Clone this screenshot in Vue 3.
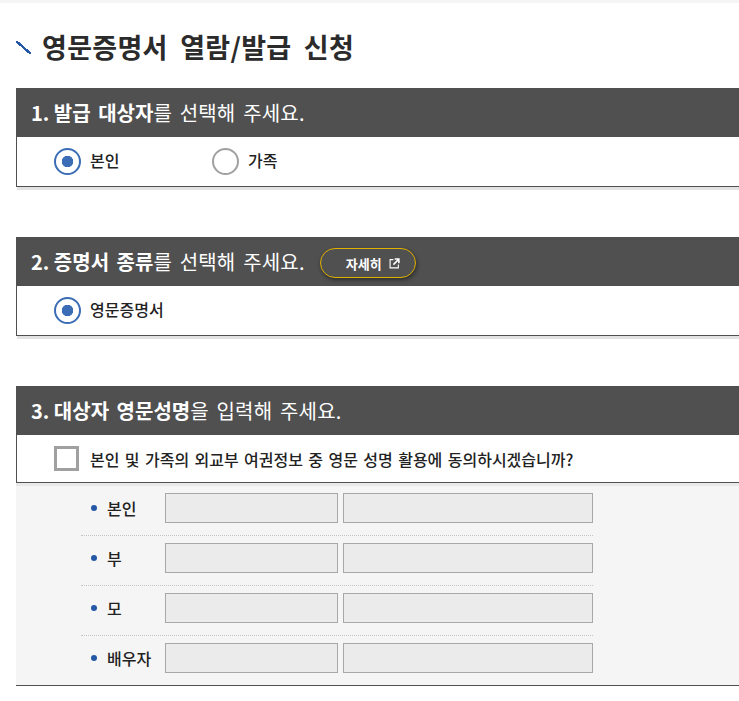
<script setup>
// 영문증명서 신청 폼
const people = ['본인', '부', '모', '배우자']
</script>

<template>
  <div class="page">
    <div class="top-strip"></div>
    <h1 class="page-title"><span class="title-mark"></span>영문증명서 열람/발급 신청</h1>

    <section class="step step-first">
      <h2 class="step-head"><b><span class="num">1. </span>발급 대상자</b>를 선택해 주세요.</h2>
      <div class="step-body">
        <label class="radio-item radio-wide"><span class="radio on"></span><span class="radio-text">본인</span></label>
        <label class="radio-item"><span class="radio"></span><span class="radio-text">가족</span></label>
      </div>
    </section>

    <section class="step">
      <h2 class="step-head">
        <b><span class="num">2. </span>증명서 종류</b>를 선택해 주세요.<a class="more-btn">자세히
          <svg viewBox="0 0 10 10" width="11" height="11" fill="none" stroke="#fff">
            <path d="M4 1.5H1v7.5h7.5V6" stroke-width="1" />
            <path d="M4 6l4.5-4.5M5.2 1h3.8v3.8" stroke-width="1.4" />
          </svg>
        </a>
      </h2>
      <div class="step-body">
        <label class="radio-item"><span class="radio on"></span><span class="radio-text">영문증명서</span></label>
      </div>
    </section>

    <section class="step step-last">
      <h2 class="step-head"><b><span class="num">3. </span>대상자 영문성명</b>을 입력해 주세요.</h2>
      <div class="step-body agree">
        <span class="check"></span>
        <span class="agree-text">본인 및 가족의 외교부 여권정보 중 영문 성명 활용에 동의하시겠습니까?</span>
      </div>
      <div class="names">
        <div v-for="p in people" :key="p" class="name-row">
          <span class="dot"></span>
          <span class="name-label">{{ p }}</span>
          <span class="field field-a"></span>
          <span class="field field-b"></span>
        </div>
      </div>
    </section>
  </div>
</template>

<style scoped>
.page {
  width: 739px;
  height: 701px;
  overflow: hidden;
  background: #fff;
  font-family: "Noto Sans CJK KR", "Noto Sans", sans-serif;
  color: #222;
}

.top-strip {
  height: 3px;
  background: #f5f5f5;
}

.page-title {
  display: flex;
  align-items: center;
  height: 38px;
  margin: 24px 0 23px 16px;
  font-size: 27px;
  font-weight: 700;
  letter-spacing: 0.3px;
  word-spacing: 6px;
  color: #2b2b2b;
  white-space: pre;
}

.title-mark {
  width: 15px;
  height: 13px;
  margin: 3px 11px 0 0;
  background: linear-gradient(to top right, transparent 44%, #2458a6 44%, #2458a6 56%, transparent 56%);
}

.step {
  margin-bottom: 50px;
  margin-left: 16px;
}

.step-last {
  margin-bottom: 0;
}

.step-head {
  display: flex;
  align-items: center;
  height: 49px;
  margin: 0;
  padding-left: 15px;
  background: #505050;
  color: #fff;
  font-size: 20px;
  font-weight: 400;
  letter-spacing: 0.2px;
  word-spacing: 3px;
  white-space: pre;
}

.step-head b {
  font-weight: 700;
  letter-spacing: 0;
}

.num {
  word-spacing: 0;
}

.step-body {
  display: flex;
  align-items: center;
  height: 50px;
  box-sizing: border-box;
  padding-left: 37px;
  background: #fff;
  border-left: 1px solid #505050;
  border-bottom: 1px solid #505050;
  box-shadow: 1px 3px 0 #e2e2e2;
  font-size: 16px;
  font-weight: 500;
}

.radio-item {
  display: flex;
  align-items: center;
  gap: 9px;
}

.radio-wide {
  width: 158px;
}

.radio-text {
  margin-top: -3px;
}

.radio {
  display: block;
  width: 27px;
  height: 27px;
  box-sizing: border-box;
  border: 2px solid #a0a0a0;
  border-radius: 50%;
  background: #fff;
}

.radio.on {
  border-color: #3a6db5;
  background: radial-gradient(circle, #3a6db5 0 5.5px, #fff 6px);
}

.more-btn {
  display: inline-flex;
  align-items: center;
  justify-content: center;
  gap: 4px;
  width: 96px;
  height: 30px;
  box-sizing: border-box;
  margin: 3px 0 0 15px;
  padding-left: 10px;
  border: 1px solid #e0b100;
  border-radius: 15px;
  background: #505050;
  box-shadow: 1px 2px 4px rgba(0, 0, 0, 0.45);
  font-size: 13px;
  font-weight: 700;
  letter-spacing: 0;
  word-spacing: 0;
}

.agree {
  height: 48px;
  gap: 11px;
}

.check {
  display: block;
  width: 25px;
  height: 25px;
  box-sizing: border-box;
  border: 3px solid #a0a0a0;
  background: #fff;
}

.agree-text {
  font-size: 16px;
  word-spacing: 1.8px;
}

.names {
  box-sizing: border-box;
  height: 203px;
  padding: 7px 0 0 65px;
  background: #f5f5f5;
  border-top: 3px solid #e9e9e9;
  border-bottom: 1px solid #505050;
}

.name-row {
  display: flex;
  align-items: center;
  width: 512px;
  margin-bottom: 7px;
  padding-bottom: 12px;
  border-bottom: 1px dotted #c4c4c4;
}

.name-row:last-child {
  margin-bottom: 0;
  border-bottom: 0;
}

.dot {
  width: 6px;
  height: 6px;
  margin: 0 10px 0 10px;
  border-radius: 50%;
  background: #2458a6;
}

.name-label {
  width: 58px;
  font-size: 16px;
  font-weight: 500;
}

.field {
  display: block;
  height: 30px;
  box-sizing: border-box;
  border: 1px solid #a8a8a8;
  background: #ebebeb;
}

.field-a {
  width: 173px;
  margin-right: 5px;
}

.field-b {
  width: 250px;
}
</style>
